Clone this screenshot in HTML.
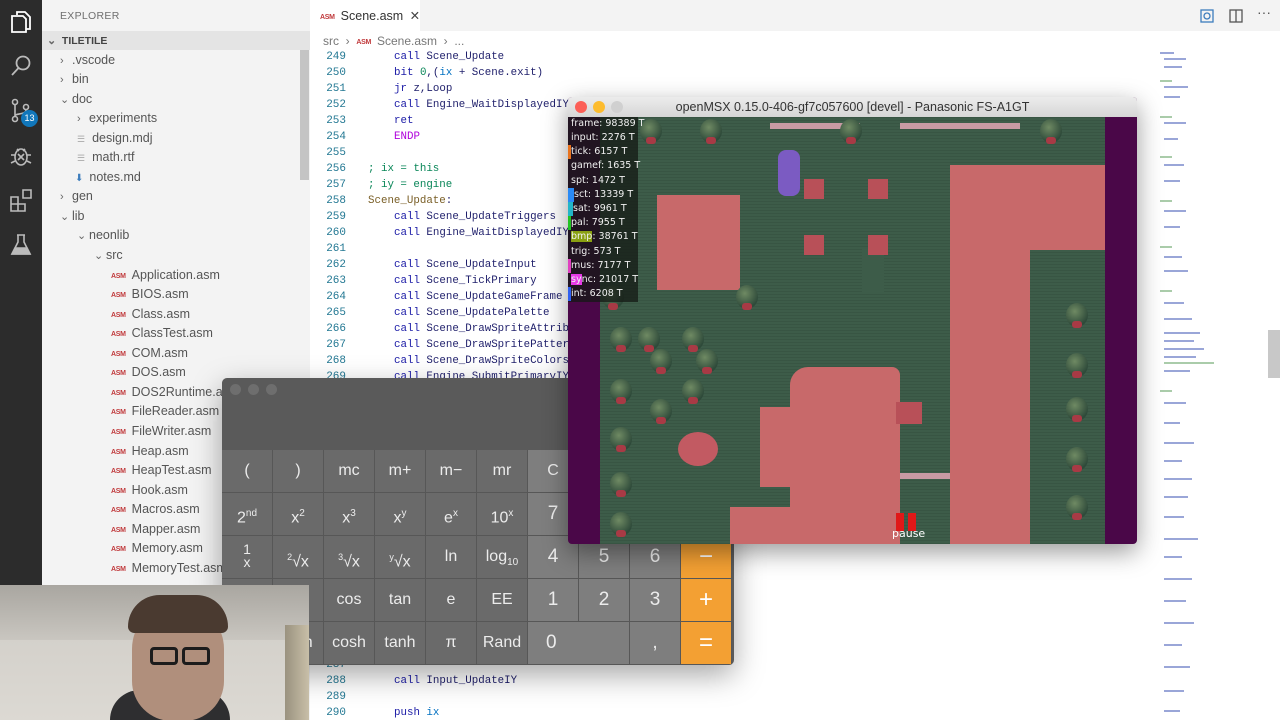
<!DOCTYPE html>
<html><head><meta charset="utf-8"><style>
*{margin:0;padding:0;box-sizing:border-box}
body{width:1280px;height:720px;overflow:hidden;background:#fff;font-family:"Liberation Sans",sans-serif;position:relative}
.abs{position:absolute}
#act{left:0;top:0;width:42px;height:720px;background:#2c2c2c}
#side{left:42px;top:0;width:268px;height:720px;background:#f3f3f3}
.tr{position:absolute;font-size:12.5px;color:#555;height:19px;line-height:19px;white-space:nowrap}
.asm{font-size:7px;color:#c0393b;font-weight:bold;margin-right:6px;letter-spacing:-.3px;vertical-align:1px}
.chev{color:#666;font-size:11px;display:inline-block;width:12px}
.ln{position:absolute;left:310px;width:36px;text-align:right;font-family:"Liberation Mono",monospace;font-size:11px;color:#237893;height:16px;line-height:16px}
.cl{position:absolute;font-family:"Liberation Mono",monospace;font-size:10.8px;color:#1f1f6b;height:16px;line-height:16px;white-space:pre}
.k{color:#1a1aa6}.c{color:#098658}.lb{color:#795e26}.m{color:#af00db}.r{color:#0070c1}
#calc{left:222px;top:378px;width:512px;height:287px;background:#5a5a5a;border-radius:5px;overflow:hidden;box-shadow:0 10px 30px rgba(0,0,0,.35)}
.b{position:absolute;width:51px;height:43px;background:#6a6a6a;border-right:1px solid #575757;border-bottom:1px solid #575757;color:#ececec;font-size:16px;text-align:center;line-height:42px}
.d{background:#7e7e7e;font-size:19px}
.o{background:#f3a033;font-size:24px;color:#fff}
#emu{left:568px;top:97px;width:569px;height:447px;background:#4a0748;border-radius:4px;overflow:hidden;box-shadow:0 8px 25px rgba(0,0,0,.4)}
.pk{position:absolute;background:#c8696a}
.tree{position:absolute;width:22px;height:24px;border-radius:50%;background:radial-gradient(circle at 40% 35%,#6f8a63,#2e4a3a 70%)}
.tree:after{content:"";position:absolute;left:6px;top:18px;width:10px;height:7px;background:#a83a45;border-radius:3px}
.pf{position:absolute;left:0;font-size:9.5px;color:#f0f0f0;height:14.2px;line-height:14px;padding-left:3px;white-space:nowrap;font-family:"DejaVu Sans",sans-serif}
.mm{position:absolute;height:2px;background:#9aa6d8}
</style></head><body>

<div id="act" class="abs">
<svg class="abs" style="left:10px;top:10px" width="22" height="24" viewBox="0 0 22 24" fill="none" stroke="#fff" stroke-width="1.8"><path d="M7 5V2h8l5 5v12h-4"/><path d="M2 6h11l3 3v13H2z"/></svg>
<svg class="abs" style="left:10px;top:54px" width="22" height="24" viewBox="0 0 22 24" fill="none" stroke="#bbb" stroke-width="1.8"><circle cx="13" cy="9" r="6.5"/><path d="M8.5 14 2 21"/></svg>
<svg class="abs" style="left:10px;top:98px" width="22" height="26" viewBox="0 0 22 26" fill="none" stroke="#bbb" stroke-width="1.6"><circle cx="5" cy="4" r="2.5"/><circle cx="5" cy="21" r="2.5"/><circle cx="16" cy="9" r="2.5"/><path d="M5 7v11M16 12c0 5-11 3-11 6"/></svg>
<div class="abs" style="left:21px;top:110px;width:17px;height:17px;border-radius:50%;background:#1177bb;color:#fff;font-size:9px;text-align:center;line-height:17px">13</div>
<svg class="abs" style="left:9px;top:143px" width="24" height="26" viewBox="0 0 24 26" fill="none" stroke="#bbb" stroke-width="1.6"><ellipse cx="12" cy="14" rx="6" ry="8"/><path d="M8 6l2 2M16 6l-2 2M2 12h4M18 12h4M2 20l4-2M22 20l-4-2M9 11l6 6M15 11l-6 6"/></svg>
<svg class="abs" style="left:9px;top:188px" width="24" height="24" viewBox="0 0 24 24" fill="none" stroke="#bbb" stroke-width="1.6"><path d="M2 9h7v7H2zM9 16h7v7H9zM2 16h7v7H2zM14 2h8v8h-8z"/></svg>
<svg class="abs" style="left:10px;top:233px" width="22" height="24" viewBox="0 0 22 24" fill="#bbb" stroke="#bbb" stroke-width="1.6"><path d="M7 2h8M8 2v7L2 21h18L14 9V2" fill="none"/><path d="M5 15h12l3 6H2z"/></svg>
</div>

<div id="side" class="abs">
<div class="abs" style="left:18px;top:10px;font-size:10.5px;color:#6f6f6f;letter-spacing:.3px">EXPLORER</div>
<div class="abs" style="left:0;top:31px;width:268px;height:19px;background:#e4e4e4"></div>
<div class="abs" style="left:5px;top:34px;font-size:10.5px;color:#444;font-weight:bold"><span class="chev">⌄</span> TILETILE</div>
<div class="abs" style="left:258px;top:50px;width:9px;height:130px;background:#c4c4c4"></div>
</div>
<div class="tr" style="left:60px;top:51px"><span class="chev">›</span>.vscode</div>
<div class="tr" style="left:60px;top:70px"><span class="chev">›</span>bin</div>
<div class="tr" style="left:60px;top:90px"><span class="chev">⌄</span>doc</div>
<div class="tr" style="left:77px;top:109px"><span class="chev">›</span>experiments</div>
<div class="tr" style="left:77px;top:129px"><span style="color:#aaa;font-size:9px;margin-right:7px">☰</span>design.mdj</div>
<div class="tr" style="left:77px;top:148px"><span style="color:#aaa;font-size:9px;margin-right:7px">☰</span>math.rtf</div>
<div class="tr" style="left:75px;top:168px"><span style="color:#3d7dbd;font-size:10px;margin-right:6px">⬇</span>notes.md</div>
<div class="tr" style="left:60px;top:187px"><span class="chev">›</span>gen</div>
<div class="tr" style="left:60px;top:207px"><span class="chev">⌄</span>lib</div>
<div class="tr" style="left:77px;top:226px"><span class="chev">⌄</span>neonlib</div>
<div class="tr" style="left:94px;top:246px"><span class="chev">⌄</span>src</div>
<div class="tr" style="left:111px;top:266px"><span class="asm">ASM</span>Application.asm</div>
<div class="tr" style="left:111px;top:285px"><span class="asm">ASM</span>BIOS.asm</div>
<div class="tr" style="left:111px;top:305px"><span class="asm">ASM</span>Class.asm</div>
<div class="tr" style="left:111px;top:324px"><span class="asm">ASM</span>ClassTest.asm</div>
<div class="tr" style="left:111px;top:344px"><span class="asm">ASM</span>COM.asm</div>
<div class="tr" style="left:111px;top:363px"><span class="asm">ASM</span>DOS.asm</div>
<div class="tr" style="left:111px;top:383px"><span class="asm">ASM</span>DOS2Runtime.asm</div>
<div class="tr" style="left:111px;top:402px"><span class="asm">ASM</span>FileReader.asm</div>
<div class="tr" style="left:111px;top:422px"><span class="asm">ASM</span>FileWriter.asm</div>
<div class="tr" style="left:111px;top:442px"><span class="asm">ASM</span>Heap.asm</div>
<div class="tr" style="left:111px;top:461px"><span class="asm">ASM</span>HeapTest.asm</div>
<div class="tr" style="left:111px;top:481px"><span class="asm">ASM</span>Hook.asm</div>
<div class="tr" style="left:111px;top:500px"><span class="asm">ASM</span>Macros.asm</div>
<div class="tr" style="left:111px;top:520px"><span class="asm">ASM</span>Mapper.asm</div>
<div class="tr" style="left:111px;top:539px"><span class="asm">ASM</span>Memory.asm</div>
<div class="tr" style="left:111px;top:559px"><span class="asm">ASM</span>MemoryTest.asm</div>

<div class="abs" style="left:310px;top:0;width:970px;height:31px;background:#f3f3f3"></div>
<div class="abs" style="left:310px;top:0;width:110px;height:31px;background:#fff;font-size:12.5px;color:#333;line-height:32px;padding-left:10px;white-space:nowrap"><span class="asm">ASM</span>Scene.asm <span style="margin-left:3px;color:#444">✕</span></div>
<div class="abs" style="left:323px;top:34px;font-size:12px;color:#777;white-space:nowrap">src &nbsp;›&nbsp; <span class="asm">ASM</span>Scene.asm &nbsp;›&nbsp; ...</div>
<svg class="abs" style="left:1200px;top:9px" width="14" height="14" viewBox="0 0 14 14" fill="none" stroke="#3d7dbd" stroke-width="1.3"><rect x="1" y="1" width="12" height="12"/><circle cx="7" cy="7" r="3"/></svg>
<svg class="abs" style="left:1229px;top:9px" width="14" height="14" viewBox="0 0 14 14" fill="none" stroke="#555" stroke-width="1.3"><rect x="1" y="1" width="12" height="12"/><path d="M7 1v12"/></svg>
<div class="abs" style="left:1257px;top:4px;font-size:14px;color:#555">···</div>

<div class="ln" style="top:49px">249</div><div class="cl" style="left:394px;top:49px"><span class="k">call</span> Scene_Update</div>
<div class="ln" style="top:65px">250</div><div class="cl" style="left:394px;top:65px"><span class="k">bit</span> <span class="c">0</span>,(<span class="r">ix</span> + Scene.exit)</div>
<div class="ln" style="top:81px">251</div><div class="cl" style="left:394px;top:81px"><span class="k">jr</span> z,Loop</div>
<div class="ln" style="top:97px">252</div><div class="cl" style="left:394px;top:97px"><span class="k">call</span> Engine_WaitDisplayedIY</div>
<div class="ln" style="top:113px">253</div><div class="cl" style="left:394px;top:113px"><span class="k">ret</span></div>
<div class="ln" style="top:129px">254</div><div class="cl" style="left:394px;top:129px"><span class="m">ENDP</span></div>
<div class="ln" style="top:145px">255</div>
<div class="ln" style="top:161px">256</div><div class="cl c" style="left:368px;top:161px">; ix = this</div>
<div class="ln" style="top:177px">257</div><div class="cl c" style="left:368px;top:177px">; iy = engine</div>
<div class="ln" style="top:193px">258</div><div class="cl" style="left:368px;top:193px"><span class="lb">Scene_Update</span>:</div>
<div class="ln" style="top:209px">259</div><div class="cl" style="left:394px;top:209px"><span class="k">call</span> Scene_UpdateTriggers</div>
<div class="ln" style="top:225px">260</div><div class="cl" style="left:394px;top:225px"><span class="k">call</span> Engine_WaitDisplayedIY</div>
<div class="ln" style="top:241px">261</div>
<div class="ln" style="top:257px">262</div><div class="cl" style="left:394px;top:257px"><span class="k">call</span> Scene_UpdateInput</div>
<div class="ln" style="top:273px">263</div><div class="cl" style="left:394px;top:273px"><span class="k">call</span> Scene_TickPrimary</div>
<div class="ln" style="top:289px">264</div><div class="cl" style="left:394px;top:289px"><span class="k">call</span> Scene_UpdateGameFrame</div>
<div class="ln" style="top:305px">265</div><div class="cl" style="left:394px;top:305px"><span class="k">call</span> Scene_UpdatePalette</div>
<div class="ln" style="top:321px">266</div><div class="cl" style="left:394px;top:321px"><span class="k">call</span> Scene_DrawSpriteAttrib</div>
<div class="ln" style="top:337px">267</div><div class="cl" style="left:394px;top:337px"><span class="k">call</span> Scene_DrawSpritePatter</div>
<div class="ln" style="top:353px">268</div><div class="cl" style="left:394px;top:353px"><span class="k">call</span> Scene_DrawSpriteColors</div>
<div class="ln" style="top:369px">269</div><div class="cl" style="left:394px;top:369px"><span class="k">call</span> Engine_SubmitPrimaryIY</div>
<div class="ln" style="top:657px">287</div>
<div class="ln" style="top:673px">288</div><div class="cl" style="left:394px;top:673px"><span class="k">call</span> Input_UpdateIY</div>
<div class="ln" style="top:689px">289</div>
<div class="ln" style="top:705px">290</div><div class="cl" style="left:394px;top:705px"><span class="k">push</span> <span class="r">ix</span></div>

<div class="abs" style="left:1160px;top:50px;width:90px;height:670px">
<div class="mm" style="left:0;top:2px;width:14px"></div><div class="mm" style="left:4px;top:8px;width:22px"></div><div class="mm" style="left:4px;top:16px;width:18px"></div>
<div class="mm" style="left:0;top:30px;width:12px;background:#aca"></div><div class="mm" style="left:4px;top:36px;width:24px"></div><div class="mm" style="left:4px;top:46px;width:16px"></div>
<div class="mm" style="left:0;top:66px;width:12px;background:#aca"></div><div class="mm" style="left:4px;top:72px;width:22px"></div><div class="mm" style="left:4px;top:88px;width:14px"></div>
<div class="mm" style="left:0;top:106px;width:12px;background:#aca"></div><div class="mm" style="left:4px;top:114px;width:20px"></div><div class="mm" style="left:4px;top:130px;width:16px"></div>
<div class="mm" style="left:0;top:150px;width:12px;background:#aca"></div><div class="mm" style="left:4px;top:160px;width:22px"></div><div class="mm" style="left:4px;top:176px;width:16px"></div>
<div class="mm" style="left:0;top:196px;width:12px;background:#aca"></div><div class="mm" style="left:4px;top:206px;width:18px"></div><div class="mm" style="left:4px;top:220px;width:24px"></div>
<div class="mm" style="left:0;top:240px;width:12px;background:#aca"></div><div class="mm" style="left:4px;top:252px;width:20px"></div><div class="mm" style="left:4px;top:268px;width:28px"></div>
<div class="mm" style="left:4px;top:282px;width:36px"></div><div class="mm" style="left:4px;top:290px;width:30px"></div><div class="mm" style="left:4px;top:298px;width:40px"></div>
<div class="mm" style="left:4px;top:306px;width:32px"></div><div class="mm" style="left:4px;top:312px;width:50px;background:#aca"></div><div class="mm" style="left:4px;top:320px;width:26px"></div>
<div class="mm" style="left:0;top:340px;width:12px;background:#aca"></div><div class="mm" style="left:4px;top:352px;width:22px"></div><div class="mm" style="left:4px;top:372px;width:16px"></div>
<div class="mm" style="left:4px;top:392px;width:30px"></div><div class="mm" style="left:4px;top:410px;width:18px"></div><div class="mm" style="left:4px;top:428px;width:28px"></div>
<div class="mm" style="left:4px;top:446px;width:24px"></div><div class="mm" style="left:4px;top:466px;width:20px"></div><div class="mm" style="left:4px;top:488px;width:34px"></div>
<div class="mm" style="left:4px;top:506px;width:18px"></div><div class="mm" style="left:4px;top:528px;width:28px"></div><div class="mm" style="left:4px;top:550px;width:22px"></div>
<div class="mm" style="left:4px;top:572px;width:30px"></div><div class="mm" style="left:4px;top:594px;width:18px"></div><div class="mm" style="left:4px;top:616px;width:26px"></div>
<div class="mm" style="left:4px;top:640px;width:20px"></div><div class="mm" style="left:4px;top:660px;width:16px"></div>
</div>
<div class="abs" style="left:1268px;top:330px;width:12px;height:48px;background:#c8c8c8"></div>

<div id="calc" class="abs">
<div class="abs" style="left:8px;top:6px;width:11px;height:11px;border-radius:50%;background:#6e6e6e"></div>
<div class="abs" style="left:26px;top:6px;width:11px;height:11px;border-radius:50%;background:#6e6e6e"></div>
<div class="abs" style="left:44px;top:6px;width:11px;height:11px;border-radius:50%;background:#6e6e6e"></div>
<div class="b" style="left:0;top:72px">(</div><div class="b" style="left:51px;top:72px">)</div><div class="b" style="left:102px;top:72px">mc</div><div class="b" style="left:153px;top:72px">m+</div><div class="b" style="left:204px;top:72px">m−</div><div class="b" style="left:255px;top:72px">mr</div><div class="b d" style="left:306px;top:72px;font-size:16px">C</div><div class="b d" style="left:357px;top:72px">±</div><div class="b d" style="left:408px;top:72px">%</div><div class="b o" style="left:459px;top:72px">÷</div>
<div class="b" style="left:0;top:115px">2<sup style="font-size:10px">nd</sup></div><div class="b" style="left:51px;top:115px">x<sup style="font-size:10px">2</sup></div><div class="b" style="left:102px;top:115px">x<sup style="font-size:10px">3</sup></div><div class="b" style="left:153px;top:115px">x<sup style="font-size:10px">y</sup></div><div class="b" style="left:204px;top:115px">e<sup style="font-size:10px">x</sup></div><div class="b" style="left:255px;top:115px">10<sup style="font-size:10px">x</sup></div><div class="b d" style="left:306px;top:115px">7</div><div class="b d" style="left:357px;top:115px">8</div><div class="b d" style="left:408px;top:115px">9</div><div class="b o" style="left:459px;top:115px">×</div>
<div class="b" style="left:0;top:158px;line-height:13px;padding-top:7px;font-size:14px">1<br>x</div><div class="b" style="left:51px;top:158px"><sup style="font-size:9px">2</sup>√x</div><div class="b" style="left:102px;top:158px"><sup style="font-size:9px">3</sup>√x</div><div class="b" style="left:153px;top:158px"><sup style="font-size:9px">y</sup>√x</div><div class="b" style="left:204px;top:158px">ln</div><div class="b" style="left:255px;top:158px">log<sub style="font-size:10px">10</sub></div><div class="b d" style="left:306px;top:158px">4</div><div class="b d" style="left:357px;top:158px">5</div><div class="b d" style="left:408px;top:158px">6</div><div class="b o" style="left:459px;top:158px">−</div>
<div class="b" style="left:0;top:201px">x!</div><div class="b" style="left:51px;top:201px">sin</div><div class="b" style="left:102px;top:201px">cos</div><div class="b" style="left:153px;top:201px">tan</div><div class="b" style="left:204px;top:201px">e</div><div class="b" style="left:255px;top:201px">EE</div><div class="b d" style="left:306px;top:201px">1</div><div class="b d" style="left:357px;top:201px">2</div><div class="b d" style="left:408px;top:201px">3</div><div class="b o" style="left:459px;top:201px">+</div>
<div class="b" style="left:0;top:244px">Rad</div><div class="b" style="left:51px;top:244px">sinh</div><div class="b" style="left:102px;top:244px">cosh</div><div class="b" style="left:153px;top:244px">tanh</div><div class="b" style="left:204px;top:244px">π</div><div class="b" style="left:255px;top:244px">Rand</div><div class="b d" style="left:306px;top:244px;width:102px;text-align:left;padding-left:18px">0</div><div class="b d" style="left:408px;top:244px">,</div><div class="b o" style="left:459px;top:244px">=</div>
</div>

<div id="emu" class="abs">
<div class="abs" style="left:0;top:0;width:569px;height:20px;background:linear-gradient(#ececec,#d6d6d6);font-size:12.5px;color:#333;text-align:center;line-height:20px">openMSX 0.15.0-406-gf7c057600 [devel] - Panasonic FS-A1GT</div>
<div class="abs" style="left:7px;top:4px;width:12px;height:12px;border-radius:50%;background:#fc5f57"></div>
<div class="abs" style="left:25px;top:4px;width:12px;height:12px;border-radius:50%;background:#fdbc2e"></div>
<div class="abs" style="left:43px;top:4px;width:12px;height:12px;border-radius:50%;background:#d0d0d0"></div>
<div class="abs" style="left:32px;top:20px;width:505px;height:427px;background:#3d5c49;overflow:hidden;background-image:repeating-linear-gradient(0deg,rgba(0,0,0,.08) 0 1px,transparent 1px 3px)">
 <div class="pk" style="left:57px;top:78px;width:83px;height:95px"></div>
 <div class="pk" style="left:350px;top:48px;width:155px;height:85px"></div>
 <div class="pk" style="left:350px;top:48px;width:80px;height:379px"></div>
 <div class="pk" style="left:190px;top:250px;width:110px;height:177px;border-radius:18px 8px 0 0"></div>
 <div class="pk" style="left:160px;top:290px;width:60px;height:80px"></div>
 <div class="pk" style="left:130px;top:390px;width:80px;height:37px"></div>
 <div class="abs" style="left:262px;top:130px;width:22px;height:45px;background:#3d5c49"></div>
 <div class="abs" style="left:170px;top:6px;width:90px;height:6px;background:#c89aa4"></div>
 <div class="abs" style="left:300px;top:6px;width:120px;height:6px;background:#c89aa4"></div>
 <div class="abs" style="left:178px;top:33px;width:22px;height:46px;background:#7b5bc2;border-radius:8px"></div>
 <div class="pk" style="left:204px;top:62px;width:20px;height:20px;background:#b85058"></div>
 <div class="pk" style="left:268px;top:62px;width:20px;height:20px;background:#b85058"></div>
 <div class="pk" style="left:204px;top:118px;width:20px;height:20px;background:#b85058"></div>
 <div class="pk" style="left:268px;top:118px;width:20px;height:20px;background:#b85058"></div>
 <div class="pk" style="left:296px;top:285px;width:26px;height:22px;background:#b85058"></div>
 <div class="abs" style="left:78px;top:315px;width:40px;height:34px;border-radius:50%;background:#c25a62"></div>
 <div class="abs" style="left:300px;top:356px;width:50px;height:6px;background:#c89aa4"></div>
 <div class="tree" style="left:2px;top:168px"></div><div class="tree" style="left:136px;top:168px"></div>
 <div class="tree" style="left:10px;top:210px"></div><div class="tree" style="left:38px;top:210px"></div><div class="tree" style="left:82px;top:210px"></div>
 <div class="tree" style="left:50px;top:232px"></div><div class="tree" style="left:96px;top:232px"></div>
 <div class="tree" style="left:10px;top:262px"></div><div class="tree" style="left:82px;top:262px"></div>
 <div class="tree" style="left:50px;top:282px"></div><div class="tree" style="left:10px;top:310px"></div>
 <div class="tree" style="left:10px;top:355px"></div><div class="tree" style="left:10px;top:395px"></div>
 <div class="tree" style="left:466px;top:186px"></div><div class="tree" style="left:466px;top:236px"></div>
 <div class="tree" style="left:466px;top:280px"></div><div class="tree" style="left:466px;top:330px"></div><div class="tree" style="left:466px;top:378px"></div>
 <div class="tree" style="left:40px;top:2px"></div><div class="tree" style="left:100px;top:2px"></div><div class="tree" style="left:240px;top:2px"></div><div class="tree" style="left:440px;top:2px"></div>
 <div class="abs" style="left:296px;top:396px;width:8px;height:18px;background:#e01818"></div>
 <div class="abs" style="left:308px;top:396px;width:8px;height:18px;background:#e01818"></div>
 <div class="abs" style="left:292px;top:410px;font-size:11px;color:#fff;font-family:'DejaVu Sans',sans-serif">pause</div>
</div>
<div class="abs" style="left:0;top:20px;width:70px;height:185px;background:rgba(20,25,20,.75)">
 <div class="pf" style="top:0"><span style="position:absolute;left:0;top:0;width:57px;height:14px;background:#22c322;z-index:-1"></span>frame: 98389 T</div>
 <div class="pf" style="top:14px">input: 2276 T</div>
 <div class="pf" style="top:28px;border-left:3px solid #e8731f;padding-left:0">tick: 6157 T</div>
 <div class="pf" style="top:42px">gamef: 1635 T</div>
 <div class="pf" style="top:57px">spt: 1472 T</div>
 <div class="pf" style="top:71px;border-left:6px solid #2a8af5;padding-left:0">sct: 13339 T</div>
 <div class="pf" style="top:85px;border-left:5px solid #22b5c8;padding-left:0">sat: 9961 T</div>
 <div class="pf" style="top:99px;border-left:3px solid #22c322;padding-left:0">pal: 7955 T</div>
 <div class="pf" style="top:113px"><span style="background:#8aa012">bmp</span>: 38761 T</div>
 <div class="pf" style="top:128px">trig: 573 T</div>
 <div class="pf" style="top:142px;border-left:3px solid #e040c0;padding-left:0">mus: 7177 T</div>
 <div class="pf" style="top:156px"><span style="background:#e83ae8">sy</span>nc: 21017 T</div>
 <div class="pf" style="top:170px;border-left:3px solid #3060f0;padding-left:0">int: 6208 T</div>
</div>
</div>

<div class="abs" style="left:0;top:585px;width:309px;height:135px;overflow:hidden;background:linear-gradient(180deg,#bdb9b2 0,#d4d1cb 40%,#dcd9d3 100%)">
 <div class="abs" style="left:0;top:0;width:309px;height:55px;background:linear-gradient(180deg,#a9a6a0,#c9c6c0)"></div>
 <div class="abs" style="left:285px;top:40px;width:24px;height:95px;background:linear-gradient(90deg,#9a927f,#c8bfa8)"></div>
 <div class="abs" style="left:110px;top:105px;width:120px;height:40px;border-radius:30px 30px 0 0;background:#2e2e30"></div>
 <div class="abs" style="left:132px;top:18px;width:92px;height:118px;border-radius:46px 46px 40px 40px;background:#b08f7c"></div>
 <div class="abs" style="left:128px;top:10px;width:100px;height:38px;border-radius:50px 50px 10px 10px;background:#4a3a30"></div>
 <div class="abs" style="left:150px;top:62px;width:28px;height:18px;border:3px solid #1c1c1c;border-radius:4px"></div>
 <div class="abs" style="left:182px;top:62px;width:28px;height:18px;border:3px solid #1c1c1c;border-radius:4px"></div>
</div>
</body></html>
